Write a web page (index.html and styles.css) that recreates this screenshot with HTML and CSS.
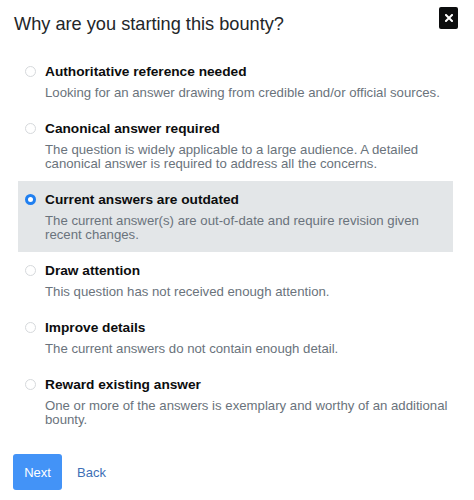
FILE: index.html
```html
<!DOCTYPE html>
<html lang="en">
<head>
<meta charset="utf-8">
<title>Bounty reason</title>
<link rel="stylesheet" href="styles.css">
</head>
<body>
<div class="modal">
  <header class="modal-header">
    <h1 class="modal-title">Why are you starting this bounty?</h1>
    <button class="close-btn" aria-label="Close">
      <svg width="8" height="8" viewBox="0 0 8 8"><path d="M1 1L7 7M7 1L1 7" stroke="#fff" stroke-width="2" stroke-linecap="square"/></svg>
    </button>
  </header>
  <ul class="reasons">
    <li class="reason">
      <span class="radio"></span>
      <div class="reason-body">
        <div class="reason-label">Authoritative reference needed</div>
        <div class="reason-desc">Looking for an answer drawing from credible and/or official sources.</div>
      </div>
    </li>
    <li class="reason">
      <span class="radio"></span>
      <div class="reason-body">
        <div class="reason-label">Canonical answer required</div>
        <div class="reason-desc">The question is widely applicable to a large audience. A detailed canonical answer is required to address all the concerns.</div>
      </div>
    </li>
    <li class="reason selected">
      <span class="radio checked"></span>
      <div class="reason-body">
        <div class="reason-label">Current answers are outdated</div>
        <div class="reason-desc">The current answer(s) are out-of-date and require revision given recent changes.</div>
      </div>
    </li>
    <li class="reason">
      <span class="radio"></span>
      <div class="reason-body">
        <div class="reason-label">Draw attention</div>
        <div class="reason-desc">This question has not received enough attention.</div>
      </div>
    </li>
    <li class="reason">
      <span class="radio"></span>
      <div class="reason-body">
        <div class="reason-label">Improve details</div>
        <div class="reason-desc">The current answers do not contain enough detail.</div>
      </div>
    </li>
    <li class="reason">
      <span class="radio"></span>
      <div class="reason-body">
        <div class="reason-label">Reward existing answer</div>
        <div class="reason-desc">One or more of the answers is exemplary and worthy of an additional bounty.</div>
      </div>
    </li>
  </ul>
  <footer class="actions">
    <button class="btn-primary">Next</button>
    <button class="btn-link">Back</button>
  </footer>
</div>
</body>
</html>
```
FILE: styles.css
```css
* { box-sizing: border-box; }
html, body {
  margin: 0;
  padding: 0;
  background: #fff;
}
body {
  font-family: "Liberation Sans", Arial, sans-serif;
  color: #232629;
}
.modal {
  padding: 7px 16px 0 14px;
}
.modal-header {
  display: flex;
  justify-content: space-between;
  align-items: flex-start;
  height: 46px;
}
.modal-title {
  margin: 5px 0 0 0;
  font-size: 18.2px;
  font-weight: normal;
  line-height: 24px;
  color: #232629;
}
.close-btn {
  width: 19px;
  height: 22px;
  margin: 0;
  padding: 0;
  border: none;
  border-radius: 2px;
  background: #0c0d0e;
  display: flex;
  align-items: center;
  justify-content: center;
}
.reasons {
  list-style: none;
  margin: 0 5px 0 4px;
  padding: 0;
}
.reason {
  display: flex;
  align-items: flex-start;
  gap: 9px;
  padding: 10px 0 10px 7px;
}
.reason.selected {
  background: #e3e6e8;
}
.radio {
  flex: none;
  width: 11px;
  height: 11px;
  margin-top: 3px;
  border-radius: 50%;
  border: 1px solid #d6d9dc;
  background: #fff;
}
.radio.checked {
  border: 3.5px solid #1f7ff0;
  background: #fff;
}
.reason-label {
  font-size: 13.7px;
  font-weight: bold;
  line-height: 17px;
  color: #0c0d0e;
}
.reason-desc {
  margin-top: 6px;
  font-size: 13.2px;
  line-height: 14px;
  color: #6a737c;
}
.actions {
  display: flex;
  align-items: center;
  gap: 0;
  margin-top: 17px;
  margin-left: -1px;
}
.btn-primary {
  width: 49px;
  height: 36px;
  border: none;
  border-radius: 3px;
  background: #4393f7;
  color: #fff;
  font-family: "Liberation Sans", Arial, sans-serif;
  font-size: 13px;
  padding: 0;
}
.btn-link {
  border: none;
  background: none;
  color: #3d6fb6;
  font-family: "Liberation Sans", Arial, sans-serif;
  font-size: 13px;
  padding: 0 0 0 15px;
}
```
